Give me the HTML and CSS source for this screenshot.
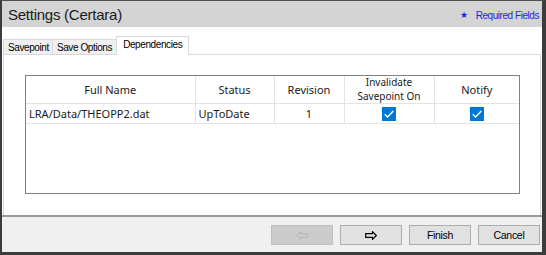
FILE: index.html
```html
<!DOCTYPE html>
<html>
<head>
<meta charset="utf-8">
<link rel="stylesheet" href="styles.css">
</head>
<body>
<div class="window">
  <div class="titlebar">
    <span class="title">Settings (Certara)</span>
    <span class="req"><span class="star">★</span>Required Fields</span>
  </div>
  <div class="content">
    <div class="tabs">
      <div class="tab">Savepoint</div>
      <div class="tab">Save Options</div>
      <div class="tab active">Dependencies</div>
    </div>
    <div class="tabpage">
      <div class="grid">
        <table>
          <colgroup>
            <col class="c1"><col class="c2"><col class="c3"><col class="c4"><col class="c5">
          </colgroup>
          <thead>
            <tr>
              <th>Full Name</th>
              <th>Status</th>
              <th>Revision</th>
              <th class="two"><div class="hl">Invalidate</div><div class="hl">Savepoint On</div></th>
              <th>Notify</th>
            </tr>
          </thead>
          <tbody>
            <tr>
              <td>LRA/Data/THEOPP2.dat</td>
              <td>UpToDate</td>
              <td class="center">1</td>
              <td class="center"><svg class="chk" width="14" height="14" viewBox="0 0 14 14"><rect width="14" height="14" fill="#0078d7"/><path d="M2.8 7.2 L5.6 10 L11.3 4" fill="none" stroke="#fff" stroke-width="1.5"/></svg></td>
              <td class="center"><svg class="chk" width="14" height="14" viewBox="0 0 14 14"><rect width="14" height="14" fill="#0078d7"/><path d="M2.8 7.2 L5.6 10 L11.3 4" fill="none" stroke="#fff" stroke-width="1.5"/></svg></td>
            </tr>
          </tbody>
        </table>
      </div>
    </div>
  </div>
  <div class="footer">
    <button class="btn disabled"><svg width="12" height="9" viewBox="0 0 12 9"><path d="M0.7 4.5 L4.5 0.7 L4.5 2.7 L11.3 2.7 L11.3 6.3 L4.5 6.3 L4.5 8.3 Z" fill="none" stroke="#b4b4b4" stroke-width="1"/></svg></button>
    <button class="btn"><svg width="12" height="9" viewBox="0 0 12 9"><path d="M11.3 4.5 L7.5 0.7 L7.5 2.7 L0.7 2.7 L0.7 6.3 L7.5 6.3 L7.5 8.3 Z" fill="none" stroke="#000" stroke-width="1.2"/></svg></button>
    <button class="btn">Finish</button>
    <button class="btn">Cancel</button>
  </div>
</div>
</body>
</html>
```
FILE: styles.css
```css
html, body {
  margin: 0;
  padding: 0;
  background: #ffffff;
}
.window {
  width: 546px;
  height: 255px;
  box-sizing: border-box;
  border-top: 1px solid #505050;
  border-left: 2px solid #3c3c3c;
  border-right: 4px solid #3c3c3c;
  border-bottom: 3px solid #3c3c3c;
  display: flex;
  flex-direction: column;
  font-family: "Liberation Sans", Arial, sans-serif;
}
.titlebar {
  height: 26px;
  flex: none;
  background: #d4d4d4;
  display: flex;
  align-items: center;
  justify-content: space-between;
  padding: 0 3px 0 6px;
}
.title {
  font-size: 15px;
  color: #1a1a1a;
  letter-spacing: -0.25px;
}
.req {
  font-size: 10px;
  color: #1e1ef0;
  display: flex;
  align-items: center;
  padding-top: 2px;
  letter-spacing: -0.45px;
}
.star {
  font-size: 9px;
  margin-right: 8px;
}
.content {
  flex: 1;
  background: #ffffff;
  padding: 9px 1px 0 1px;
  display: flex;
  flex-direction: column;
  border-bottom: 2px solid #9a9a9a;
}
.tabs {
  display: flex;
  align-items: flex-end;
  height: 18px;
  position: relative;
  z-index: 1;
}
.tab {
  height: 15px;
  box-sizing: border-box;
  border: 1px solid #d9d9d9;
  border-bottom: none;
  background: #f0f0f0;
  font-size: 10px;
  letter-spacing: -0.4px;
  color: #000;
  padding: 2px 3px 0 4px;
  margin-right: -1px;
  line-height: 12px;
}
.tab:nth-child(2) {
  padding-right: 4px;
}
.tab.active {
  height: 19px;
  background: #ffffff;
  margin-bottom: -1px;
  padding: 2px 6px 0 6px;
}
.tabpage {
  flex: 1;
  border: 1px solid #d9d9d9;
  border-bottom: none;
  padding: 20px 20px 0 21px;
}
.grid {
  height: 119px;
  box-sizing: border-box;
  border: 1px solid #828282;
  background: #ffffff;
}
.grid table {
  border-collapse: collapse;
  table-layout: fixed;
  width: 493px;
  font-family: "Noto Sans", "Open Sans", sans-serif;
  font-size: 11px;
  color: #1a1a1a;
}
.c1 { width: 169px; }
.c2 { width: 79px; }
.c3 { width: 70px; }
.c4 { width: 90px; }
.c5 { width: 85px; }
th {
  font-weight: normal;
  height: 26px;
  padding: 0;
  line-height: 14px;
  border-right: 1px solid #e3e3e3;
  border-bottom: 1px solid #e3e3e3;
  text-align: center;
  vertical-align: middle;
}
.hl {
  font-size: 10px;
  height: 13.6px;
  line-height: 13.6px;
}
td {
  height: 19px;
  padding: 0 0 0 3px;
  border-right: 1px solid #e3e3e3;
  border-bottom: 1px solid #e3e3e3;
  vertical-align: middle;
  white-space: nowrap;
}
th:last-child, td:last-child { border-right: none; }
td.center { text-align: center; padding: 0; }
.chk { display: block; margin: 0 auto; }
.footer {
  height: 35px;
  flex: none;
  background: #f0f0f0;
  display: flex;
  justify-content: flex-end;
  align-items: flex-start;
  gap: 7px;
  padding: 8px 2px 0 0;
  box-sizing: border-box;
}
.btn {
  width: 62px;
  height: 20px;
  box-sizing: border-box;
  background: #e1e1e1;
  border: 1px solid #adadad;
  font-family: "Liberation Sans", Arial, sans-serif;
  font-size: 10.5px;
  letter-spacing: -0.3px;
  color: #000;
  padding: 0;
  display: flex;
  align-items: center;
  justify-content: center;
}
.btn.disabled {
  background: #cccccc;
  border-color: #bfbfbf;
}
```
